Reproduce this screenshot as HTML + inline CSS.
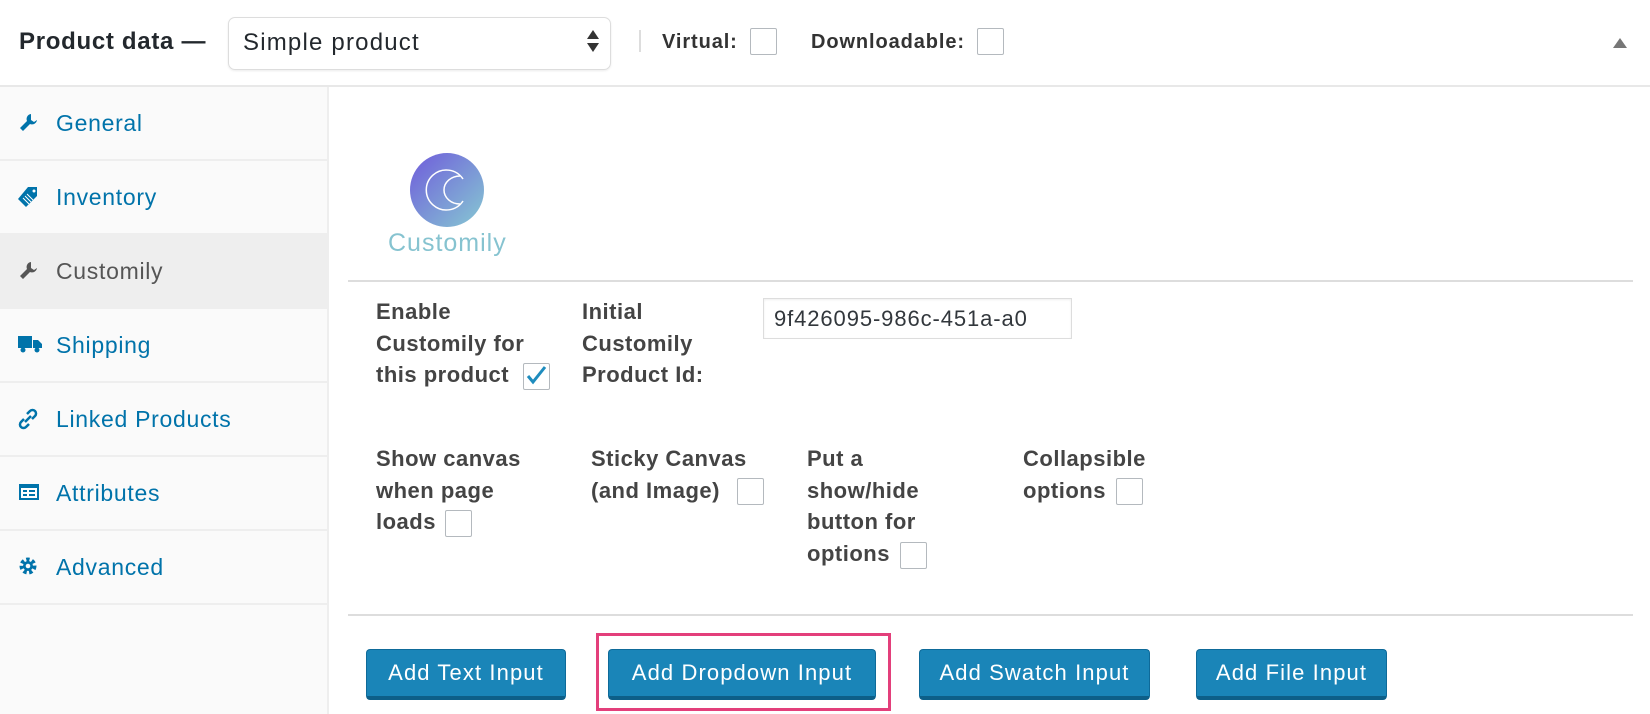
<!DOCTYPE html>
<html><head><meta charset="utf-8"><style>
*{box-sizing:border-box;margin:0;padding:0}
body{width:1650px;height:714px;background:#fff;font-family:"Liberation Sans",Arial,sans-serif;position:relative;overflow:hidden;color:#23282d}
.a{position:absolute}
.hdr{left:0;top:0;width:1650px;height:87px;border-bottom:2px solid #e8e8e8}
.cb{position:absolute;width:27px;height:27px;border:1.5px solid #b4b9be;background:#fff;border-radius:2px}
.side{left:0;top:87px;width:329px;height:627px;background:#fafafa;border-right:2px solid #eee}
.item{position:absolute;left:0;width:327px;height:74px;border-bottom:2px solid #eee;color:#0073aa;font-size:23px;letter-spacing:0.7px}
.item span{position:absolute;left:56px;top:23px}
.item svg{position:absolute;left:18px;top:25px}
.lbl{position:absolute;font-weight:bold;font-size:22px;line-height:31.6px;color:#444;letter-spacing:0.5px}
.btn{position:absolute;top:649px;height:51px;background:#1a85b8;border:1px solid #0e6a99;border-bottom:4px solid #0d5f88;border-radius:4px;color:#fff;font-size:22px;letter-spacing:1.1px;text-align:center;line-height:46px}
</style></head><body>
<div class="a hdr"></div>
<div class="a" style="left:19px;top:28px;font-size:24px;font-weight:bold;letter-spacing:0.7px">Product data —</div>
<div class="a" style="left:228px;top:17px;width:383px;height:53px;border:1.5px solid #ddd;border-radius:7px;box-shadow:0 1px 2px rgba(0,0,0,.08)"></div>
<div class="a" style="left:243px;top:29px;font-size:24px;letter-spacing:1.2px">Simple product</div>
<div class="a" style="left:587px;top:30px;width:0;height:0;border-left:6px solid transparent;border-right:6px solid transparent;border-bottom:9px solid #333"></div>
<div class="a" style="left:587px;top:43px;width:0;height:0;border-left:6px solid transparent;border-right:6px solid transparent;border-top:9px solid #333"></div>
<div class="a" style="left:639px;top:30px;width:1.5px;height:22px;background:#ddd"></div>
<div class="a" style="left:662px;top:31px;font-size:20px;font-weight:bold;color:#333;letter-spacing:0.9px">Virtual:</div>
<div class="cb" style="left:750px;top:28px"></div>
<div class="a" style="left:811px;top:31px;font-size:20px;font-weight:bold;color:#333;letter-spacing:0.9px">Downloadable:</div>
<div class="cb" style="left:977px;top:28px"></div>
<div class="a" style="left:1613px;top:38px;width:0;height:0;border-left:7px solid transparent;border-right:7px solid transparent;border-bottom:10px solid #777"></div>

<div class="a side"></div>
<div class="item" style="top:87px"><svg width="20" height="22" viewBox="0 0 20 22"><path d="M13 2a5 5 0 0 0-4 7L2 16l3 3 7-7a5 5 0 0 0 7-4l-3 2-3-2 0-3z" fill="#0073aa"/></svg><span>General</span></div>
<div class="item" style="top:161px"><svg width="22" height="22" viewBox="0 0 22 22"><path d="M10 1h9v9L8 21 0 13z" fill="#0073aa"/><circle cx="16" cy="5" r="1.5" fill="#fff"/><path d="M5 12l6 6M7 10l6 6M9 8l6 6" stroke="#fff" stroke-width="1"/></svg><span>Inventory</span></div>
<div class="item" style="top:235px;background:#eee;color:#555"><svg width="20" height="22" viewBox="0 0 20 22"><path d="M13 2a5 5 0 0 0-4 7L2 16l3 3 7-7a5 5 0 0 0 7-4l-3 2-3-2 0-3z" fill="#555"/></svg><span>Customily</span></div>
<div class="item" style="top:309px"><svg width="24" height="20" viewBox="0 0 24 20"><path d="M0 2h14v12H0zM15 6h5l4 4v4h-9z" fill="#0073aa"/><circle cx="5" cy="16" r="2.5" fill="#0073aa"/><circle cx="19" cy="16" r="2.5" fill="#0073aa"/></svg><span>Shipping</span></div>
<div class="item" style="top:383px"><svg width="20" height="22" viewBox="0 0 20 22"><path d="M9 6l3-3a3.5 3.5 0 0 1 5 5l-3 3M11 16l-3 3a3.5 3.5 0 0 1-5-5l3-3M7 14l6-6" stroke="#0073aa" stroke-width="2.5" fill="none"/></svg><span>Linked Products</span></div>
<div class="item" style="top:457px"><svg width="22" height="20" viewBox="0 0 22 20"><rect x="1" y="2" width="20" height="16" fill="#0073aa"/><rect x="3" y="6" width="16" height="10" fill="#fff"/><rect x="5" y="8" width="4" height="2" fill="#0073aa"/><rect x="11" y="8" width="6" height="2" fill="#0073aa"/><rect x="5" y="12" width="4" height="2" fill="#0073aa"/><rect x="11" y="12" width="6" height="2" fill="#0073aa"/></svg><span>Attributes</span></div>
<div class="item" style="top:531px"><svg width="20" height="20" viewBox="0 0 20 20"><circle cx="10" cy="10" r="6" fill="none" stroke="#0073aa" stroke-width="5" stroke-dasharray="3 2.3"/><circle cx="10" cy="10" r="5" fill="#0073aa"/><circle cx="10" cy="10" r="2.3" fill="#fafafa"/></svg><span>Advanced</span></div>

<svg class="a" style="left:408px;top:151px" width="78" height="78" viewBox="0 0 78 78"><defs><linearGradient id="g" x1="0" y1="0" x2="1" y2="1"><stop offset="0" stop-color="#6f5bdb"/><stop offset="1" stop-color="#86c9d2"/></linearGradient></defs><circle cx="39" cy="39" r="37" fill="url(#g)"/><path d="M55 28a20 20 0 1 0 0 22" stroke="#fff" stroke-width="1.5" fill="none"/><path d="M52 25a16 14 0 1 0 0 28" stroke="#fff" stroke-width="1.5" fill="none"/></svg>
<div class="a" style="left:388px;top:229px;font-size:25px;color:#86c3d0;letter-spacing:1px">Customily</div>
<div class="a" style="left:348px;top:280px;width:1285px;height:2px;background:#ddd"></div>

<div class="lbl" style="left:376px;top:296px">Enable<br>Customily for<br>this product</div>
<div class="cb" style="left:523px;top:363px"><svg width="24" height="24" viewBox="0 0 24 24" style="position:absolute;left:0;top:0"><path d="M4 12l5 6L21 3" stroke="#1e8cbe" stroke-width="3" fill="none"/></svg></div>
<div class="lbl" style="left:582px;top:296px">Initial<br>Customily<br>Product Id:</div>
<div class="a" style="left:763px;top:298px;width:309px;height:41px;border:1.5px solid #ddd;box-shadow:inset 0 1px 2px rgba(0,0,0,.07);font-size:22px;letter-spacing:0.9px;color:#32373c;padding:7px 10px;overflow:hidden;white-space:nowrap">9f426095-986c-451a-a0</div>

<div class="lbl" style="left:376px;top:443px">Show canvas<br>when page<br>loads</div>
<div class="cb" style="left:445px;top:510px"></div>
<div class="lbl" style="left:591px;top:443px">Sticky Canvas<br>(and Image)</div>
<div class="cb" style="left:737px;top:478px"></div>
<div class="lbl" style="left:807px;top:443px">Put a<br>show/hide<br>button for<br>options</div>
<div class="cb" style="left:900px;top:542px"></div>
<div class="lbl" style="left:1023px;top:443px">Collapsible<br>options</div>
<div class="cb" style="left:1116px;top:478px"></div>

<div class="a" style="left:348px;top:614px;width:1285px;height:2px;background:#ddd"></div>
<div class="btn" style="left:366px;width:200px">Add Text Input</div>
<div class="a" style="left:596px;top:633px;width:295px;height:78px;border:3.5px solid #e33f7b"></div>
<div class="btn" style="left:608px;width:268px">Add Dropdown Input</div>
<div class="btn" style="left:919px;width:231px">Add Swatch Input</div>
<div class="btn" style="left:1196px;width:191px">Add File Input</div>
</body></html>
